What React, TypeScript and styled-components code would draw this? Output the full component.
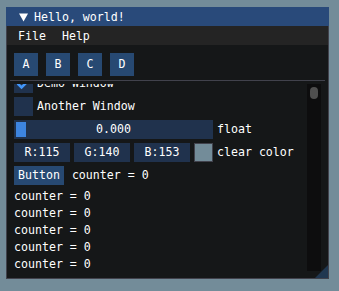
import styled, { createGlobalStyle } from 'styled-components';

const GlobalStyle = createGlobalStyle`
  html, body {
    margin: 0;
    padding: 0;
    background: rgb(115, 140, 153);
  }
  body {
    font-family: "DejaVu Sans Mono", "Liberation Mono", monospace;
    font-size: 11.6px;
    line-height: 15px;
    color: #fff;
  }
`;

const Desktop = styled.div`
  padding: 7px 0 0 6px;
`;

const Window = styled.div`
  position: relative;
  box-sizing: border-box;
  width: 323px;
  height: 272px;
  border: 1px solid rgb(65, 66, 76);
  background: rgb(21, 23, 24);
  display: flex;
  flex-direction: column;
`;

const TitleBar = styled.div`
  margin: -1px -1px 0 -1px;
  padding: 3px 0 0 11px;
  box-sizing: border-box;
  height: 19px;
  background: rgb(41, 74, 122);
  display: flex;
  align-items: flex-start;
  gap: 4px;
  white-space: pre;
`;

const MenuBar = styled.div`
  height: 19px;
  box-sizing: border-box;
  padding: 3px 0 0 7px;
  background: rgb(36, 36, 36);
  display: flex;
  gap: 8px;
`;

const MenuItem = styled.span`
  padding: 0 4px;
`;

const Body = styled.div`
  flex: 1;
  padding: 8px 7px 0 7px;
  display: flex;
  flex-direction: column;
  min-height: 0;
`;

const Row = styled.div<{ $gap: number }>`
  display: flex;
  align-items: flex-start;
  gap: ${p => p.$gap}px;
  white-space: pre;
`;

const SquareButton = styled.div`
  width: 24px;
  height: 23px;
  background: rgb(39, 73, 114);
  display: flex;
  align-items: center;
  justify-content: center;
`;

const Separator = styled.div`
  height: 1px;
  margin: 4px -4px 3px -4px;
  background: rgb(65, 66, 76);
`;

const Child = styled.div`
  height: 187px;
  display: flex;
`;

const ChildClip = styled.div`
  flex: 1;
  overflow: hidden;
`;

const ChildContent = styled.div`
  margin-top: -10px;
  display: flex;
  flex-direction: column;
  gap: 4px;
`;

const Frame = styled.div<{ $w: number }>`
  position: relative;
  box-sizing: border-box;
  width: ${p => p.$w}px;
  height: 19px;
  padding-top: 2px;
  background: rgb(32, 50, 77);
  text-align: center;
  white-space: pre;
`;

const Label = styled.span`
  padding-top: 2px;
`;

const SliderGrab = styled.div`
  position: absolute;
  left: 2px;
  top: 2px;
  width: 10px;
  height: 15px;
  background: rgb(61, 133, 224);
`;

const Swatch = styled.div`
  box-sizing: border-box;
  width: 19px;
  height: 19px;
  background: rgb(115, 140, 153);
  border: 1px solid rgb(65, 66, 76);
`;

const Button = styled.div`
  height: 19px;
  box-sizing: border-box;
  padding: 2px 4px 0 4px;
  background: rgb(39, 73, 114);
`;

const Line = styled.div`
  height: 13px;
  white-space: pre;
`;

const Scrollbar = styled.div`
  width: 14px;
  background: rgb(13, 13, 14);
  padding-top: 3px;
  box-sizing: border-box;
`;

const ScrollGrab = styled.div`
  width: 8px;
  height: 12px;
  margin-left: 3px;
  border-radius: 4px;
  background: rgb(79, 79, 79);
`;

const ResizeGrip = styled.svg`
  position: absolute;
  right: 0;
  bottom: 0;
`;

function CheckBox({ checked }: { checked?: boolean }) {
  return (
    <Frame $w={19} style={{ padding: 0 }}>
      {checked && (
        <svg width="19" height="19" viewBox="0 0 19 19" style={{ display: 'block' }}>
          <polyline
            points="3.65,9.5 7.55,13.4 15.35,5.6"
            fill="none"
            stroke="rgb(66,150,250)"
            strokeWidth="2.6"
            strokeLinejoin="miter"
          />
        </svg>
      )}
    </Frame>
  );
}

export default function App() {
  const counters = [0, 1, 2, 3, 4];
  return (
    <>
      <GlobalStyle />
      <Desktop>
        <Window>
          <TitleBar>
            <svg width="13" height="13" viewBox="0 0 13 13" style={{ display: 'block', marginTop: 1 }}>
              <polygon points="2,2.6 11,2.6 6.5,10.4" fill="#fff" />
            </svg>
            <span>Hello, world!</span>
          </TitleBar>
          <MenuBar>
            <MenuItem>File</MenuItem>
            <MenuItem>Help</MenuItem>
          </MenuBar>
          <Body>
            <Row $gap={8}>
              {['A', 'B', 'C', 'D'].map(l => (
                <SquareButton key={l}>{l}</SquareButton>
              ))}
            </Row>
            <Separator />
            <Child>
              <ChildClip>
                <ChildContent>
                  <Row $gap={4}>
                    <CheckBox checked />
                    <Label>Demo Window</Label>
                  </Row>
                  <Row $gap={4}>
                    <CheckBox />
                    <Label>Another Window</Label>
                  </Row>
                  <Row $gap={4}>
                    <Frame $w={199}>
                      <SliderGrab />
                      0.000
                    </Frame>
                    <Label>float</Label>
                  </Row>
                  <Row $gap={4}>
                    <Frame $w={56}>R:115</Frame>
                    <Frame $w={56}>G:140</Frame>
                    <Frame $w={56}>B:153</Frame>
                    <Swatch />
                    <Label>clear color</Label>
                  </Row>
                  <Row $gap={8}>
                    <Button>Button</Button>
                    <Label>counter = 0</Label>
                  </Row>
                  {counters.map(i => (
                    <Line key={i}>counter = 0</Line>
                  ))}
                </ChildContent>
              </ChildClip>
              <Scrollbar>
                <ScrollGrab />
              </Scrollbar>
            </Child>
          </Body>
          <ResizeGrip width="13" height="13" viewBox="0 0 13 13">
            <polygon points="13,0 13,13 0,13" fill="rgb(32,55,80)" />
          </ResizeGrip>
        </Window>
      </Desktop>
    </>
  );
}
